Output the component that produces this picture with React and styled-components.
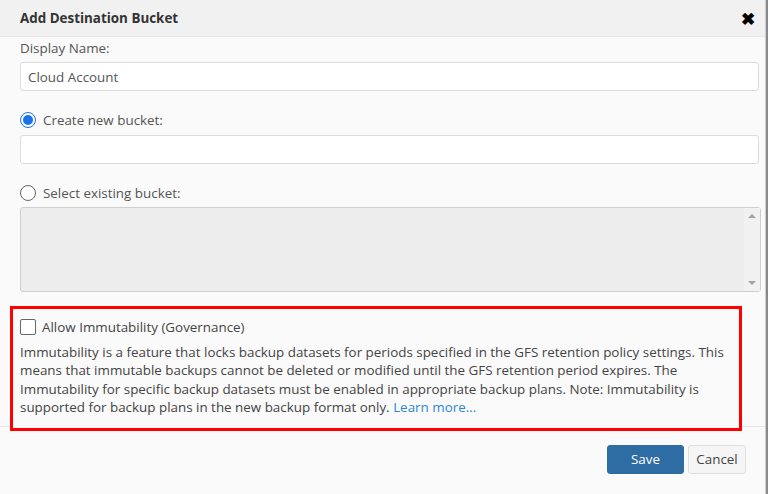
import styled, { createGlobalStyle } from 'styled-components';

const GlobalStyle = createGlobalStyle`
  html, body {
    margin: 0;
    padding: 0;
    background: #8a8a8a;
    font-family: 'Open Sans', 'Liberation Sans', sans-serif;
  }
`;

const Dialog = styled.div`
  width: 765px;
  height: 494px;
  background: #fafafa;
  border-right: 1px solid #d0d0d0;
  display: flex;
  flex-direction: column;
  overflow: hidden;
`;

const Header = styled.div`
  height: 37px;
  box-sizing: border-box;
  background: #f1f1f1;
  border-bottom: 1px solid #e8e8e8;
  display: flex;
  align-items: center;
  justify-content: space-between;
  padding: 0 10px 0 20px;
`;

const Title = styled.h3`
  margin: 0;
  font-size: 13.4px;
  font-weight: 700;
  color: #333;
`;

const Close = styled.span`
  font-size: 17px;
  font-weight: 700;
  color: #000;
  line-height: 1;
  margin-top: 1px;
`;

const Body = styled.div`
  padding: 1px 4px 0 20px;
  display: flex;
  flex-direction: column;
`;

const Label = styled.div`
  font-size: 13.4px;
  line-height: 20px;
  color: #555;
`;

const Input = styled.div`
  box-sizing: border-box;
  height: ${({ h }) => h || 29}px;
  margin-top: ${({ mt }) => mt || 4}px;
  margin-right: 2px;
  background: #fff;
  border: 1px solid #dcdcdc;
  border-radius: 3px;
  padding: 0 7px;
  display: flex;
  align-items: center;
  font-size: 13.4px;
  color: #555;
`;

const RadioRow = styled.label`
  display: flex;
  align-items: center;
  gap: 7px;
  margin-top: 19px;
  font-size: 13.4px;
  line-height: 20px;
  color: #555;
`;

const Radio = styled.span`
  box-sizing: border-box;
  width: 16px;
  height: 16px;
  border-radius: 50%;
  border: 1px solid ${({ checked }) => (checked ? '#1a73e8' : '#666')};
  background: #fff;
  display: flex;
  align-items: center;
  justify-content: center;

  &::after {
    content: '';
    display: ${({ checked }) => (checked ? 'block' : 'none')};
    width: 10px;
    height: 10px;
    border-radius: 50%;
    background: #1a73e8;
  }
`;

const ListBox = styled.div`
  box-sizing: border-box;
  height: 85px;
  margin-top: 4px;
  background: #ededed;
  border: 1px solid #cfcfcf;
  border-radius: 3px;
  display: flex;
  justify-content: flex-end;
`;

const ScrollBar = styled.div`
  width: 16px;
  background: #f1f1f1;
  display: flex;
  flex-direction: column;
  justify-content: space-between;
  align-items: center;
  padding: 6px 0;
`;

const Arrow = styled.span`
  width: 0;
  height: 0;
  border-left: 4px solid transparent;
  border-right: 4px solid transparent;
  ${({ down }) => (down ? 'border-top: 4px solid #a3a3a3;' : 'border-bottom: 4px solid #a3a3a3;')}
`;

/* red annotation frame; it overlaps the footer's top rule */
const Highlight = styled.div`
  position: relative;
  z-index: 1;
  background: #fafafa;
  margin: 14px 19px -5px -10px;
  border: 3px solid #ff0000;
  padding: 8px 10px 11px 7px;
`;

const CheckRow = styled.label`
  display: flex;
  align-items: center;
  gap: 6px;
  font-size: 13.4px;
  line-height: 20px;
  color: #444;
`;

const Checkbox = styled.span`
  box-sizing: border-box;
  width: 16px;
  height: 16px;
  border: 1px solid #666;
  border-radius: 2px;
  background: #fff;
`;

const Note = styled.p`
  margin: 6px 0 0;
  font-size: 13.4px;
  line-height: 18.4px;
  color: #444;
  white-space: nowrap;
`;

const Link = styled.a`
  color: #2b88d8;
  text-decoration: none;
`;

const Footer = styled.div`
  display: flex;
  justify-content: flex-end;
  gap: 4px;
  border-top: 1px solid #e6e6e6;
  padding: 18px 19px 0 0;
`;

const Button = styled.button`
  box-sizing: border-box;
  width: ${({ primary }) => (primary ? 77 : 58)}px;
  height: 29px;
  padding: 0;
  border-radius: 3px;
  font-family: 'Open Sans', 'Liberation Sans', sans-serif;
  font-size: 13.4px;
  color: ${({ primary }) => (primary ? '#fff' : '#444')};
  background: ${({ primary }) => (primary ? '#2e6da4' : '#f5f5f5')};
  border: 1px solid ${({ primary }) => (primary ? '#2e6da4' : '#dedede')};
  cursor: pointer;
`;

export default function App() {
  return (
    <>
      <GlobalStyle />
      <Dialog>
        <Header>
          <Title>Add Destination Bucket</Title>
          <Close>✖</Close>
        </Header>
        <Body>
          <Label>Display Name:</Label>
          <Input>Cloud Account</Input>
          <RadioRow>
            <Radio checked />
            Create new bucket:
          </RadioRow>
          <Input mt={5} />
          <RadioRow>
            <Radio />
            Select existing bucket:
          </RadioRow>
          <ListBox>
            <ScrollBar>
              <Arrow />
              <Arrow down />
            </ScrollBar>
          </ListBox>
          <Highlight>
            <CheckRow>
              <Checkbox />
              Allow Immutability (Governance)
            </CheckRow>
            <Note>
              Immutability is a feature that locks backup datasets for periods specified in the GFS retention policy settings. This
              <br />
              means that immutable backups cannot be deleted or modified until the GFS retention period expires. The
              <br />
              Immutability for specific backup datasets must be enabled in appropriate backup plans. Note: Immutability is
              <br />
              supported for backup plans in the new backup format only. <Link href="#">Learn more...</Link>
            </Note>
          </Highlight>
        </Body>
        <Footer>
          <Button primary>Save</Button>
          <Button>Cancel</Button>
        </Footer>
      </Dialog>
    </>
  );
}
